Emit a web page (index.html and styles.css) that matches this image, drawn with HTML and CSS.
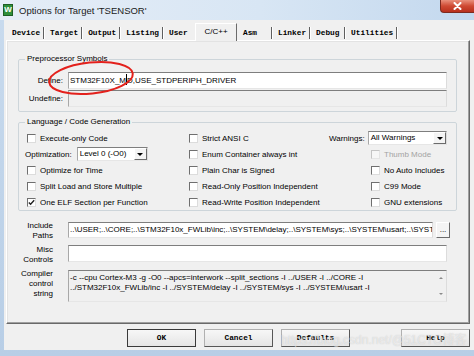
FILE: index.html
```html
<!DOCTYPE html>
<html lang="en">
<head>
    <meta charset="UTF-8">
    <title>Options for Target 'TSENSOR'</title>
    <link rel="stylesheet" href="styles.css">
</head>
<body>

<div class="window">
    <div class="titlebar">
        <span class="app-icon">W</span>
        <span class="title">Options for Target 'TSENSOR'</span>
        <span class="close">
            <svg width="9" height="8" viewBox="0 0 9 8"><path d="M1.5 1 L7.5 7 M7.5 1 L1.5 7" stroke="#fff" stroke-width="2" stroke-linecap="round"/></svg>
        </span>
    </div>

    <div class="client">
        <div class="tabs">
            <span class="tab">Device</span>
            <span class="tab">Target</span>
            <span class="tab">Output</span>
            <span class="tab">Listing</span>
            <span class="tab plain">User</span>
            <span class="tab active">C/C++</span>
            <span class="tab">Asm</span>
            <span class="tab">Linker</span>
            <span class="tab">Debug</span>
            <span class="tab">Utilities</span>
        </div>

        <div class="panel">
            <fieldset class="group">
                <legend>Preprocessor Symbols</legend>
                <div class="pre-grid">
                    <label>Define:</label>
                    <div class="field">STM32F10X_M<span class="caret"></span>D,USE_STDPERIPH_DRIVER</div>
                    <label>Undefine:</label>
                    <div class="field off"></div>
                </div>
            </fieldset>

            <fieldset class="group lang">
                <legend>Language / Code Generation</legend>
                <div class="lang-grid">
                    <div class="check"><span class="box"></span>Execute-only Code</div>
                    <div class="check"><span class="box"></span>Strict ANSI C</div>
                    <div class="opt warn">
                        <span>Warnings:</span>
                        <div class="select"><span>All Warnings</span><i class="drop"></i></div>
                    </div>

                    <div class="opt level">
                        <span>Optimization:</span>
                        <div class="select"><span>Level 0 (-O0)</span><i class="drop"></i></div>
                    </div>
                    <div class="check"><span class="box"></span>Enum Container always int</div>
                    <div class="check right disabled"><span class="box"></span>Thumb Mode</div>

                    <div class="check"><span class="box"></span>Optimize for Time</div>
                    <div class="check"><span class="box"></span>Plain Char is Signed</div>
                    <div class="check right"><span class="box"></span>No Auto Includes</div>

                    <div class="check"><span class="box"></span>Split Load and Store Multiple</div>
                    <div class="check"><span class="box"></span>Read-Only Position Independent</div>
                    <div class="check right"><span class="box"></span>C99 Mode</div>

                    <div class="check">
                        <span class="box">
                            <svg width="7" height="7" viewBox="0 0 7 7"><path d="M0.8 3.4 L2.6 5.3 L6.2 1.2" fill="none" stroke="#222" stroke-width="1.4"/></svg>
                        </span>One ELF Section per Function
                    </div>
                    <div class="check"><span class="box"></span>Read-Write Position Independent</div>
                    <div class="check right"><span class="box"></span>GNU extensions</div>
                </div>
            </fieldset>

            <div class="paths">
                <label>Include<br>Paths</label>
                <div class="inc">
                    <div class="field">..\USER;..\CORE;..\STM32F10x_FWLib\inc;..\SYSTEM\delay;..\SYSTEM\sys;..\SYSTEM\usart;..\SYSTEM\adc</div>
                    <span class="dots">...</span>
                </div>

                <label>Misc<br>Controls</label>
                <div class="field"></div>

                <label>Compiler<br>control<br>string</label>
                <div class="code">
                    <div class="code-text">-c --cpu Cortex-M3 -g -O0 --apcs=interwork --split_sections -I ../USER -I ../CORE -I<br>../STM32F10x_FWLib/inc -I ../SYSTEM/delay -I ../SYSTEM/sys -I ../SYSTEM/usart -I</div>
                    <div class="scroll"><i class="up"></i><i class="down"></i></div>
                </div>
            </div>
        </div>

        <div class="buttons">
            <span class="btn default">OK</span>
            <span class="btn">Cancel</span>
            <span class="btn defaults">Defaults</span>
            <span class="btn">Help</span>
        </div>
    </div>

    <svg class="mark" width="96" height="44" viewBox="0 0 96 44">
        <ellipse cx="47" cy="21" rx="42" ry="15.5" transform="rotate(-6 47 21)" fill="none" stroke="#e3211c" stroke-width="2"/>
    </svg>
    <div class="watermark">https://blog.csdn.net/@51CTO博客</div>
</div>

</body>
</html>
```

FILE: styles.css
```css
* {
    box-sizing: border-box;
}
body {
    margin: 0;
    background-color: #c4d6ea;
    font-family: "Liberation Sans", Arial, sans-serif;
    font-size: 8px;
    color: #000;
}
.window {
    position: relative;
    width: 474px;
    height: 356px;
    overflow: hidden;
    background: linear-gradient(#c9dbee, #b8cee6);
}
.titlebar {
    height: 20px;
    display: flex;
    align-items: center;
    padding-left: 3px;
    background: linear-gradient(90deg, #e5edf7, #d8e6f4 55%, #c3d8ee);
}
.app-icon {
    width: 10px;
    height: 12px;
    background-color: #2f8f3a;
    border: 1px solid #1d5e25;
    color: #fff;
    font: bold 8px/10px "Liberation Sans", sans-serif;
    text-align: center;
}
.title {
    margin-left: 6px;
    font-size: 9.5px;
    color: #1a1a1a;
}
.close {
    margin-left: auto;
    align-self: flex-start;
    width: 34px;
    height: 13px;
    display: flex;
    align-items: center;
    justify-content: center;
    background: linear-gradient(#e9907c, #cf4a33 50%, #b8301d);
    border: 1px solid #7d2a1f;
    border-top: none;
    border-right: none;
    border-radius: 0 0 0 4px;
}

.client {
    margin-left: 4px;
    height: 330px;
    background-color: #f0f0f0;
    padding: 0 4px 0 2px;
}
.tabs {
    display: flex;
    height: 20px;
}
.tab {
    margin-top: 7px;
    height: 12px;
    min-width: 35px;
    padding: 0 3px 0 6px;
    font: bold 7.8px/12px "Liberation Mono", monospace;
    border-right: 1px solid #5e5e5e;
    box-shadow: 1px 0 0 #fff;
    white-space: nowrap;
}
.tab.plain {
    min-width: 32px;
    border-right: none;
    box-shadow: none;
}
.tab.active {
    position: relative;
    z-index: 1;
    margin-top: 3px;
    height: 18px;
    width: 42px;
    min-width: 0;
    padding: 0;
    text-align: center;
    font: 8px/15px "Liberation Sans", sans-serif;
    background-color: #f0f0f0;
    border-top: 1px solid #fff;
    border-left: 1px solid #fff;
    border-right: 1px solid #6b6b6b;
    box-shadow: none;
}

.panel {
    height: 284px;
    padding-top: 13px;
    border: 1px solid;
    border-color: #fff #696969 #696969 #fff;
    box-shadow: inset -1px -1px #a0a0a0, inset 1px 1px #e3e3e3;
}
.group {
    margin: 0 12px 0 11px;
    padding: 0;
    min-width: 0;
    border: 1px solid #cdd5da;
    border-radius: 2px;
}
.group legend {
    margin-left: 6px;
    padding: 0 2px;
    line-height: 10px;
}
.group.lang {
    margin-top: 5px;
}
.pre-grid {
    display: grid;
    grid-template-columns: 44px minmax(0, 1fr);
    column-gap: 5px;
    row-gap: 1px;
    padding: 8px 9px 4px 0;
}
.pre-grid label {
    text-align: right;
    align-self: center;
}
.field {
    min-width: 0;
    height: 17px;
    padding: 0 1px;
    line-height: 15px;
    background-color: #fff;
    border: 1px solid;
    border-color: #7e7e7e #dcdcdc #e6e6e6 #a8a8a8;
    white-space: nowrap;
    overflow: hidden;
}
.field.off {
    background-color: #f0f0f0;
}
.caret {
    display: inline-block;
    width: 1px;
    height: 11px;
    background-color: #000;
    vertical-align: -2px;
}

.lang-grid {
    display: grid;
    grid-template-columns: 162px 140px minmax(0, 1fr);
    grid-auto-rows: 16px;
    align-items: center;
    padding: 3px 9px 0 8px;
}
.check {
    display: flex;
    align-items: center;
    gap: 4px;
    white-space: nowrap;
}
.check.right {
    padding-left: 42px;
}
.check.disabled {
    color: #a3a3a3;
}
.box {
    flex: none;
    width: 9px;
    height: 9px;
    display: flex;
    align-items: center;
    justify-content: center;
    background-color: #fff;
    border: 1px solid;
    border-color: #6f6f6f #dcdcdc #dcdcdc #6f6f6f;
}
.disabled .box {
    border-color: #c4c4c4 #e4e4e4 #e4e4e4 #c4c4c4;
    background-color: #f6f6f6;
}
.opt {
    display: flex;
    align-items: center;
    gap: 5px;
    white-space: nowrap;
}
.opt.level {
    margin-left: -2px;
}
.opt.level .select {
    width: 71px;
}
.opt.warn {
    gap: 3px;
}
.opt.warn .select {
    flex: 1;
}
.select {
    display: flex;
    height: 14px;
    background-color: #fff;
    border: 1px solid;
    border-color: #7e7e7e #dcdcdc #e6e6e6 #a8a8a8;
}
.select span {
    flex: 1;
    padding-left: 2px;
    line-height: 12px;
}
.drop {
    width: 13px;
    display: flex;
    align-items: center;
    justify-content: center;
    background-color: #f4f4f4;
    border: 1px solid;
    border-color: #fff #6b6b6b #6b6b6b #fff;
}
.drop::after {
    content: "";
    border-left: 3px solid transparent;
    border-right: 3px solid transparent;
    border-top: 3px solid #000;
}

.paths {
    display: grid;
    grid-template-columns: 46px minmax(0, 1fr);
    column-gap: 15px;
    row-gap: 4px;
    margin-top: 10px;
    padding-right: 22px;
}
.paths label {
    text-align: right;
    line-height: 10px;
}
.inc {
    display: flex;
    gap: 3px;
    min-width: 0;
    margin: 1px -3px 0 0;
}
.inc .field {
    flex: 1;
    height: 16px;
    line-height: 14px;
}
.dots {
    flex: none;
    width: 14px;
    height: 16px;
    text-align: center;
    line-height: 14px;
    background-color: #f4f4f4;
    border: 1px solid;
    border-color: #fff #6b6b6b #6b6b6b #fff;
}
.code {
    min-width: 0;
    height: 32px;
    margin-top: 1px;
    display: flex;
    background-color: #f0f0f0;
    border: 1px solid;
    border-color: #7e7e7e #dcdcdc #e6e6e6 #a8a8a8;
}
.code-text {
    flex: 1;
    min-width: 0;
    padding: 2px 0 0 1px;
    line-height: 10px;
    white-space: nowrap;
    overflow: hidden;
}
.scroll {
    flex: none;
    width: 10px;
    display: flex;
    flex-direction: column;
    justify-content: space-between;
    align-items: center;
    padding: 6px 0 6px;
}
.up {
    border-left: 2px solid transparent;
    border-right: 2px solid transparent;
    border-bottom: 2px solid #8a8a8a;
}
.down {
    border-left: 2px solid transparent;
    border-right: 2px solid transparent;
    border-top: 2px solid #8a8a8a;
}

.buttons {
    display: flex;
    justify-content: flex-end;
    gap: 8px;
    padding-top: 5px;
}
.btn {
    width: 69px;
    height: 18px;
    text-align: center;
    font: bold 7.8px/16px "Liberation Mono", monospace;
    background: linear-gradient(#f7f7f7, #e5e5e5);
    border: 1px solid;
    border-color: #b0b0b0 #575757 #575757 #b0b0b0;
}
.btn.default {
    border-color: #3a3a3a;
}
.btn.defaults {
    margin-right: 43px;
}

.mark {
    position: absolute;
    left: 44px;
    top: 57px;
}
.watermark {
    position: absolute;
    left: 281px;
    top: 330px;
    font: 12px "Liberation Sans", "Noto Sans CJK SC", sans-serif;
    color: rgba(255, 255, 255, 0.55);
    text-shadow: 0 0 1px rgba(140, 140, 140, 0.45);
    white-space: nowrap;
}
```
